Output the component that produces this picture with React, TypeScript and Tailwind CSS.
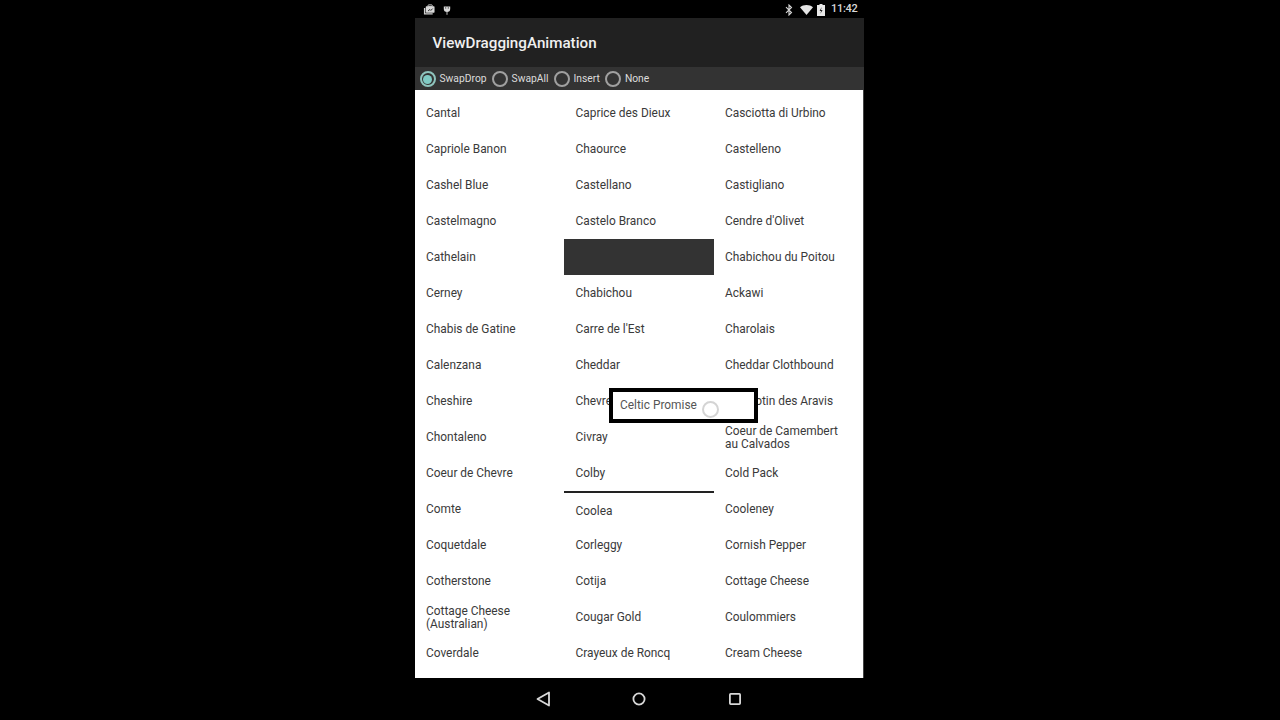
const rows: string[][] = [
  ["Cantal", "Caprice des Dieux", "Casciotta di Urbino"],
  ["Capriole Banon", "Chaource", "Castelleno"],
  ["Cashel Blue", "Castellano", "Castigliano"],
  ["Castelmagno", "Castelo Branco", "Cendre d'Olivet"],
  ["Cathelain", "", "Chabichou du Poitou"],
  ["Cerney", "Chabichou", "Ackawi"],
  ["Chabis de Gatine", "Carre de l'Est", "Charolais"],
  ["Calenzana", "Cheddar", "Cheddar Clothbound"],
  ["Cheshire", "Chevres", "Chevrotin des Aravis"],
  ["Chontaleno", "Civray", "Coeur de Camembert au Calvados"],
  ["Coeur de Chevre", "Colby", "Cold Pack"],
  ["Comte", "Coolea", "Cooleney"],
  ["Coquetdale", "Corleggy", "Cornish Pepper"],
  ["Cotherstone", "Cotija", "Cottage Cheese"],
  ["Cottage Cheese (Australian)", "Cougar Gold", "Coulommiers"],
  ["Coverdale", "Crayeux de Roncq", "Cream Cheese"],
];

function Radio({ label, checked }: { label: string; checked?: boolean }) {
  return (
    <div className="flex items-center gap-[4px]">
      <span className={`flex h-[16px] w-[16px] items-center justify-center rounded-full border-2 ${checked ? "border-[#8fc4bd]" : "border-[#a0a0a0]"}`}>
        {checked && <span className="h-[9px] w-[9px] rounded-full bg-[#80cbc4]" />}
      </span>
      <span className="text-[10.3px] text-[#dcdcdc]">{label}</span>
    </div>
  );
}

export default function App() {
  return (
    <div className="flex h-[720px] w-[1280px] justify-center overflow-hidden bg-black font-['Roboto',sans-serif]">
      <div className="flex h-full w-[449px] -translate-x-[1px] flex-col">
        <div className="flex h-[18px] items-center justify-between bg-black pl-[8px] pr-[6px] pt-[1px]">
          <div className="flex items-center gap-[8px]">
            <svg width="12" height="11" viewBox="0 0 13 11" fill="none">
              <path d="M1 4h1.5v5.5h8V11H1z" fill="#cfcfcf" />
              <rect x="3" y="2" width="9.5" height="7" rx="0.8" fill="#d8d8d8" />
              <rect x="5.5" y="0.5" width="4.5" height="2" rx="0.5" stroke="#d8d8d8" />
              <path d="M5.5 7l2-1.5 1 1 2-2" stroke="#222" strokeWidth="1" />
            </svg>
            <svg width="8" height="12" viewBox="0 0 10 12" fill="none">
              <path d="M1 1.5h8v3a4 4 0 0 1-8 0z" fill="#d8d8d8" />
              <circle cx="3.4" cy="3.4" r="0.7" fill="#222" />
              <circle cx="6.6" cy="3.4" r="0.7" fill="#222" />
              <rect x="4.4" y="8" width="1.2" height="4" fill="#c8c8c8" />
            </svg>
          </div>
          <div className="flex items-center">
            <svg width="8" height="12" viewBox="0 0 8 12" fill="none" stroke="#d8d8d8" strokeWidth="1.1">
              <path d="M1 3.2l5.5 5.3L4 11V1l2.5 2.5L1 8.8" />
            </svg>
            <svg className="ml-[7px]" width="13" height="10" viewBox="0 0 13 10">
              <path d="M0 2.2C3.5-.7 9.5-.7 13 2.2L6.5 10z" fill="#e4e4e4" />
            </svg>
            <svg className="ml-[4px]" width="8" height="12" viewBox="0 0 8 12">
              <path d="M2.5 0h3v1H8v11H0V1h2.5z" fill="#e8e8e8" />
              <path d="M4.6 3L2.6 7h1.5l-.7 2.8L5.6 6H4z" fill="#222" />
            </svg>
            <span className="ml-[6px] text-[11px] font-medium tracking-[-0.3px] text-[#d8d8d8]">11:42</span>
          </div>
        </div>
        <div className="flex h-[49px] items-center bg-[#212121] pl-[18px] pt-[2px]">
          <span className="text-[15.2px] font-medium text-[#f0f0f0]">ViewDraggingAnimation</span>
        </div>
        <div className="flex h-[23px] items-center gap-[5px] bg-[#333333] pl-[5px] pt-[1px]">
          <Radio label="SwapDrop" checked />
          <Radio label="SwapAll" />
          <Radio label="Insert" />
          <Radio label="None" />
        </div>
        <div className="relative flex-1 border-r border-[#444] bg-white pt-[5px]">
          <div className="grid grid-cols-[149.5px_149.5px_149px]">
            {rows.map((r) =>
              r.map((t, i) => (
                <div
                  key={r[0] + i}
                  className={`flex h-[36px] items-center pl-[11.5px] pr-[10px] text-[11.9px] leading-[13.5px] text-[#3a3a3a] ${t === "" ? "bg-[#333333]" : ""} ${t === "Colby" ? "shadow-[0_2px_0_#222]" : ""}`}
                >
                  <span className={t === "Coolea" ? "translate-y-[2.5px]" : "translate-y-[0.5px]"}>{t}</span>
                </div>
              ))
            )}
          </div>
          <div className="absolute left-[194px] top-[297.5px] flex h-[35px] w-[149px] items-center border-[4px] border-black bg-white pl-[7.5px] pt-[1px] text-[11.9px] text-[#555]">
            Celtic Promise
            <span className="absolute left-[89px] top-[9px] h-[17px] w-[17px] rounded-full border-2 border-[#d4d4d4]" />
          </div>
        </div>
        <div className="flex h-[42px] items-center justify-center gap-[78px] bg-black">
          <svg width="18" height="18" viewBox="0 0 18 18" fill="none" stroke="#d8d8d8" strokeWidth="1.8">
            <path d="M15 2.5v13L3.5 9z" strokeLinejoin="round" />
          </svg>
          <svg width="18" height="18" viewBox="0 0 18 18" fill="none" stroke="#d8d8d8" strokeWidth="1.8">
            <circle cx="9" cy="9" r="5.6" />
          </svg>
          <svg width="18" height="18" viewBox="0 0 18 18" fill="none" stroke="#d8d8d8" strokeWidth="1.8">
            <rect x="3.9" y="3.9" width="10.2" height="10.2" rx="0.8" />
          </svg>
        </div>
      </div>
    </div>
  );
}
